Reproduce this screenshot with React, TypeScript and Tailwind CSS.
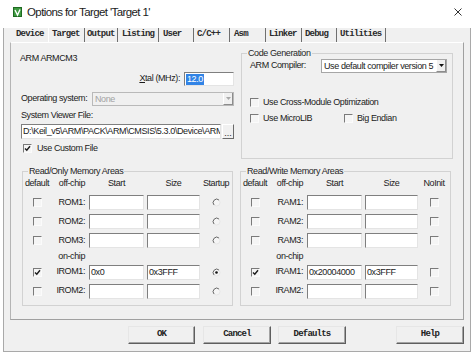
import type { ReactNode } from "react";

// classic Win32 dialog look: squeezed sans for labels, bitmap-ish mono for tabs/buttons
const sans = "font-['Liberation_Sans',Arial,sans-serif] tracking-[-0.4px]";
const mono = "font-['Liberation_Mono','DejaVu_Sans_Mono',monospace]";

const tabs = [
  { label: "Device", cls: "w-[38px] pl-[6px]" },
  { label: "Target", cls: "w-[37px] pl-[3px] border-l border-l-white border-r border-r-[#6f6f6f]" },
  { label: "Output", cls: "w-[33px] pl-[2px] border-r border-r-[#6f6f6f]" },
  { label: "Listing", cls: "w-[41px] pl-[4px] border-r border-r-[#6f6f6f]" },
  { label: "User", cls: "w-[35px] pl-[4px] border-r border-r-[#6f6f6f]" },
  { label: "C/C++", cls: "w-[36px] pl-[3px] border-r border-r-[#6f6f6f]" },
  { label: "Asm", cls: "w-[36px] pl-[4px] border-r border-r-[#6f6f6f]" },
  { label: "Linker", cls: "w-[36px] pl-[3px] border-r border-r-[#6f6f6f]" },
  { label: "Debug", cls: "w-[35px] pl-[3px] border-r border-r-[#6f6f6f]" },
  { label: "Utilities", cls: "w-[49px] pl-[3px] border-r border-r-[#6f6f6f]" },
];

function Check({ on }: { on?: boolean }) {
  return (
    <span className="block w-[9px] h-[9px] border border-t-[#7a7a7a] border-l-[#7a7a7a] border-r-[#fbfbfb] border-b-[#fbfbfb] bg-[#f5f5f5]">
      {on && (
        <svg width="7" height="7" viewBox="0 0 7 7" className="block">
          <path d="M1 3.4 L2.8 5.3 L6 1.2" stroke="#1d1d1d" strokeWidth="1.4" fill="none" />
        </svg>
      )}
    </span>
  );
}

function Radio({ on }: { on?: boolean }) {
  return (
    <svg width="9" height="9" viewBox="0 0 9 9" className="block">
      <circle cx="4.5" cy="4.5" r="3.5" fill="#f5f5f5" stroke="#e6e6e6" />
      <path d="M6.97 2.03 A3.5 3.5 0 0 0 2.03 6.97" stroke="#6a6a6a" fill="none" />
      {on && <circle cx="4.5" cy="4.5" r="1.3" fill="#111" />}
    </svg>
  );
}

function Field({ value, w }: { value?: string; w: string }) {
  return (
    <div
      className={`${w} h-[15px] border border-t-[#7f7f7f] border-l-[#7f7f7f] border-r-[#e4e4e4] border-b-[#e4e4e4] bg-white pl-[1px] leading-[13px] text-[#1b1b1b] overflow-hidden whitespace-nowrap`}
    >
      {value}
    </div>
  );
}

function Arrow({ dim }: { dim?: boolean }) {
  return (
    <div className="w-[10px] h-full flex items-center justify-center bg-[#f0f0f0] border-l border-l-white border-r border-r-[#8c8c8c] border-b border-b-[#8c8c8c]">
      <svg width="5" height="3" viewBox="0 0 5 3">
        <path d="M0 0 H5 L2.5 3 Z" fill={dim ? "#a8a8a8" : "#111"} />
      </svg>
    </div>
  );
}

function Group({ title, cls, children }: { title: string; cls: string; children: ReactNode }) {
  return (
    <fieldset className={`${cls} border border-[#d2d2d2]`}>
      <legend className="ml-[5px] px-[1px] leading-[12px] text-[#262626]">{title}</legend>
      {children}
    </fieldset>
  );
}

function MemRow({
  label,
  on,
  start,
  size,
  last,
}: {
  label: string;
  on?: boolean;
  start?: string;
  size?: string;
  last: ReactNode;
}) {
  return (
    <>
      <div className="w-[28px] flex justify-center">
        <Check on={on} />
      </div>
      <div className="w-[34px] text-right whitespace-nowrap">{label}</div>
      <div className="ml-[4px]">
        <Field w="w-[55px]" value={start} />
      </div>
      <div className="ml-[3px]">
        <Field w="w-[53px]" value={size} />
      </div>
      <div className="w-[32px] flex justify-center">{last}</div>
    </>
  );
}

function MemBox({
  title,
  cls,
  prefix,
  lastHead,
  useRadio,
  onStart,
  onSize,
}: {
  title: string;
  cls: string;
  prefix: string;
  lastHead: string;
  useRadio: boolean;
  onStart: string;
  onSize: string;
}) {
  const last = (sel?: boolean) => (useRadio ? <Radio on={sel} /> : <Check />);
  return (
    <Group title={title} cls={`${cls} w-[211px] h-[141px]`}>
      <div className="mt-[1px] h-[12px] flex items-center">
        <div className="w-[28px] flex justify-center whitespace-nowrap">default</div>
        <div className="w-[34px] text-right whitespace-nowrap">off-chip</div>
        <div className="ml-[4px] w-[55px] text-center">Start</div>
        <div className="ml-[3px] w-[53px] text-center">Size</div>
        <div className="w-[32px] flex justify-center whitespace-nowrap">{lastHead}</div>
      </div>
      <div className="mt-[3px]">
        <div className="h-[19px] flex items-center">
          <MemRow label={`${prefix}1:`} last={last()} />
        </div>
        <div className="h-[19px] flex items-center">
          <MemRow label={`${prefix}2:`} last={last()} />
        </div>
        <div className="h-[19px] flex items-center">
          <MemRow label={`${prefix}3:`} last={last()} />
        </div>
        <div className="h-[13px] flex items-center">
          <div className="w-[62px] text-right">on-chip</div>
        </div>
        <div className="h-[18px] flex items-center">
          <MemRow label={`I${prefix}1:`} on start={onStart} size={onSize} last={last(true)} />
        </div>
        <div className="h-[20px] flex items-center">
          <MemRow label={`I${prefix}2:`} last={last()} />
        </div>
      </div>
    </Group>
  );
}

function Btn({ cls, children }: { cls: string; children: ReactNode }) {
  return (
    <div
      className={`${cls} ${mono} h-[18px] flex items-center justify-center bg-[#f0f0f0] border border-t-[#e6e6e6] border-l-[#e6e6e6] border-r-[#5e5e5e] border-b-[#5e5e5e] shadow-[inset_-1px_-1px_0_#a3a3a3] text-[9px] font-bold tracking-[-0.8px] text-[#222]`}
    >
      {children}
    </div>
  );
}

export default function App() {
  return (
    <div className={`${sans} w-[474px] h-[353px] bg-white overflow-hidden text-[9px] text-[#1b1b1b]`}>
      {/* title bar */}
      <div className="h-[23px] flex items-center bg-white">
        <svg className="ml-[13px]" width="9" height="10" viewBox="0 0 9 10">
          <rect x="0.5" y="0.5" width="8" height="9" fill="#3d9a40" stroke="#1f6a22" />
          <path d="M2 3 L4.5 8 L7 2.5" stroke="#fff" strokeWidth="1.4" fill="none" />
        </svg>
        <span className="ml-[5px] text-[11.5px] leading-[14px] tracking-[-0.6px] text-[#1b1b1b]">
          Options for Target 'Target 1'
        </span>
        <svg className="ml-auto mr-[12px]" width="8" height="8" viewBox="0 0 8 8">
          <path d="M0.5 0.5 L7.5 7.5 M7.5 0.5 L0.5 7.5" stroke="#333" strokeWidth="1" />
        </svg>
      </div>

      {/* client area */}
      <div className="ml-[3px] w-[468px] h-[324px] bg-[#f0f0f0] border-l border-r border-b border-[#a9a9a9]">
        <div className={`${mono} mt-[5px] ml-[6px] h-[14px] flex text-[9px] font-bold tracking-[-0.8px] text-[#2a2a2a]`}>
          {tabs.map((t) => (
            <div key={t.label} className={`${t.cls} h-[14px] leading-[13px] whitespace-nowrap`}>
              {t.label}
            </div>
          ))}
        </div>

        <div className="ml-[6px] w-[454px] h-[278px] border border-t-white border-l-[#b4b4b4] border-r-[#a0a0a0] border-b-[#a0a0a0]">
          {/* upper section */}
          <div className="h-[117px] flex">
            <div className="ml-[10px] w-[213px]">
              <div className="mt-[9px] h-[13px] leading-[13px] -ml-px">ARM ARMCM3</div>
              <div className="mt-[7px] h-[14px] flex items-center justify-end">
                <span className="whitespace-nowrap">
                  <span className="underline">X</span>tal (MHz):
                </span>
                <div className="ml-[4px] w-[50px] h-[14px] border border-t-[#7f7f7f] border-l-[#7f7f7f] border-r-[#e4e4e4] border-b-[#e4e4e4] bg-white flex items-center pl-[1px]">
                  <span className="bg-[#3284e6] text-white leading-[11px] px-px">12.0</span>
                </div>
              </div>
              <div className="mt-[6px] h-[14px] flex items-center">
                <span className="whitespace-nowrap">Operating system:</span>
                <div className="ml-auto w-[142px] h-[14px] border border-[#b9b9b9] bg-[#f0f0f0] flex">
                  <span className="flex-1 pl-[2px] leading-[12px] text-[#a3a3a3]">None</span>
                  <Arrow dim />
                </div>
              </div>
              <div className="mt-[3px] h-[12px] leading-[12px]">System Viewer File:</div>
              <div className="mt-[3px] h-[15px] flex">
                <Field
                  w="w-[200px]"
                  value={"D:\\Keil_v5\\ARM\\PACK\\ARM\\CMSIS\\5.3.0\\Device\\ARM\\ARMCM3\\SVD\\ARMCM3.svd"}
                />
                <div className="ml-[1px] w-[12px] h-[15px] bg-[#f0f0f0] border border-t-white border-l-white border-r-[#6a6a6a] border-b-[#6a6a6a] flex items-end justify-center leading-[9px] tracking-normal">
                  ...
                </div>
              </div>
              <div className="mt-[3px] h-[13px] flex items-center">
                <span className="ml-[2px]">
                  <Check on />
                </span>
                <span className="ml-[5px]">Use Custom File</span>
              </div>
            </div>

            <div className="ml-[7px] mt-[4px]">
              <Group title="Code Generation" cls="w-[212px] h-[112px]">
                <div className="h-[13px] flex items-center">
                  <span className="ml-[8px] whitespace-nowrap">ARM Compiler:</span>
                  <div className="ml-auto mr-[5px] w-[126px] h-[14px] border border-[#a6a6a6] bg-white flex">
                    <span className="flex-1 pl-[2px] leading-[12px] whitespace-nowrap overflow-hidden">
                      Use default compiler version 5
                    </span>
                    <Arrow />
                  </div>
                </div>
                <div className="mt-[24px] h-[13px] flex items-center">
                  <span className="ml-[8px]">
                    <Check />
                  </span>
                  <span className="ml-[4px]">Use Cross-Module Optimization</span>
                </div>
                <div className="mt-[3px] h-[13px] flex items-center">
                  <span className="ml-[8px]">
                    <Check />
                  </span>
                  <span className="ml-[4px] w-[81px]">Use MicroLIB</span>
                  <Check />
                  <span className="ml-[4px]">Big Endian</span>
                </div>
              </Group>
            </div>
          </div>

          {/* memory areas */}
          <div className="mt-[5px] flex">
            <MemBox
              title="Read/Only Memory Areas"
              cls="ml-[11px]"
              prefix="ROM"
              lastHead="Startup"
              useRadio
              onStart="0x0"
              onSize="0x3FFF"
            />
            <MemBox
              title="Read/Write Memory Areas"
              cls="ml-[7px]"
              prefix="RAM"
              lastHead="NoInit"
              useRadio={false}
              onStart="0x20004000"
              onSize="0x3FFF"
            />
          </div>
        </div>

        <div className="mt-[6px] flex">
          <Btn cls="ml-[124px] w-[67px]">OK</Btn>
          <Btn cls="ml-[8px] w-[68px]">Cancel</Btn>
          <Btn cls="ml-[7px] w-[68px]">Defaults</Btn>
          <Btn cls="ml-[50px] w-[68px]">Help</Btn>
        </div>
      </div>
    </div>
  );
}
